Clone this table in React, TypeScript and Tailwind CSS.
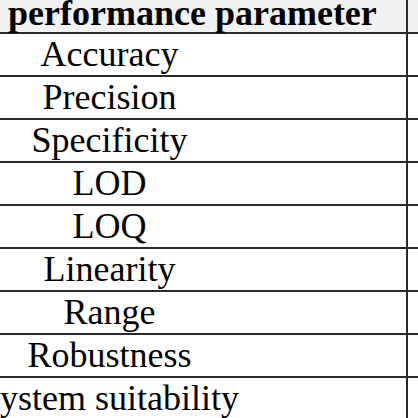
import React from "react";

const rows = [
  "Accuracy",
  "Precision",
  "Specificity",
  "LOD",
  "LOQ",
  "Linearity",
  "Range",
  "Robustness",
  "System suitability",
];

export default function App() {
  return (
    <div
      className="w-[418px] h-[418px] overflow-hidden bg-white text-black"
      style={{ fontFamily: '"Liberation Serif", "Times New Roman", serif' }}
    >
      <div className="flex h-[34px] border-b-2 border-[#2a2a2a] bg-[#f1f1f1]">
        <div className="w-[406px] h-[32px] pl-[8px] text-[36px] leading-[26px] font-bold whitespace-nowrap">
          performance parameter
        </div>
        <div className="w-[2px] bg-[#2a2a2a]" />
        <div className="flex-1" />
      </div>
      {rows.map((r) => (
        <div key={r} className="flex h-[43px] border-b-2 border-[#2a2a2a]">
          <div className="w-[406px] flex">
            <div className="w-[219px] flex justify-center text-[36px] leading-[40px] whitespace-nowrap">
              {r}
            </div>
          </div>
          <div className="w-[2px] bg-[#2a2a2a]" />
          <div className="flex-1" />
        </div>
      ))}
    </div>
  );
}
